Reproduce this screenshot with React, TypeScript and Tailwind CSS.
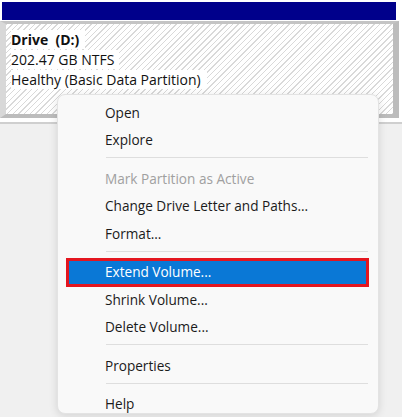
type Entry =
  | { kind: 'item'; label: string; disabled?: boolean; active?: boolean }
  | { kind: 'sep' };

const MENU: Entry[] = [
  { kind: 'item', label: 'Open' },
  { kind: 'item', label: 'Explore' },
  { kind: 'sep' },
  { kind: 'item', label: 'Mark Partition as Active', disabled: true },
  { kind: 'item', label: 'Change Drive Letter and Paths...' },
  { kind: 'item', label: 'Format...' },
  { kind: 'sep' },
  { kind: 'item', label: 'Extend Volume...', active: true },
  { kind: 'item', label: 'Shrink Volume...' },
  { kind: 'item', label: 'Delete Volume...' },
  { kind: 'sep' },
  { kind: 'item', label: 'Properties' },
  { kind: 'sep' },
  { kind: 'item', label: 'Help' },
];

const font = "font-['Open_Sans','Noto_Sans',sans-serif]";

export default function App() {
  return (
    <div className={`relative w-[402px] h-[417px] overflow-hidden bg-[#f0f0f0] ${font}`}>
      {/* Disk panel */}
      <div className="bg-white pt-[2px]">
        <div className="ml-[2px] w-[394px] h-[18px] bg-[#00008b]" />
        <div className="mt-[1px] w-[399px] border-t-[3px] border-l-[6px] border-r-[6px] border-b-[4px] border-t-[#c4c4c4] border-l-[#d8d8d8] border-r-[#bcbcbc] border-b-[#bcbcbc]">
          <div className="h-[90px] pt-[6px] pl-[5px] bg-[repeating-linear-gradient(135deg,#d9d9d9_0px,#d9d9d9_1px,#ffffff_1px,#ffffff_4px)] text-[#111] text-[14px] leading-[20px]">
            <div>
              <span className="bg-white pr-[6px] font-bold">Drive&nbsp;&nbsp;(D:)</span>
            </div>
            <div>
              <span className="bg-white pr-[5px]">202.47 GB NTFS</span>
            </div>
            <div>
              <span className="bg-white pr-[6px]">Healthy (Basic Data Partition)</span>
            </div>
          </div>
        </div>
        <div className="h-[4px] bg-white" />
      </div>
      <div className="h-[2px] bg-[#cfcfcf]" />

      {/* Context menu */}
      <div className="absolute left-[57px] top-[94px] w-[322px] h-[320px] overflow-hidden rounded-[8px] border border-[#e3e3e3] bg-[#f9f9f9] shadow-[0_2px_8px_rgba(0,0,0,0.12)] pt-[4px] text-[13.6px]">
        {MENU.map((entry, i) =>
          entry.kind === 'sep' ? (
            <div key={i} className="h-[11px] pt-[3px]">
              <div className="ml-[48px] mr-[10px] h-px bg-[#dedede]" />
            </div>
          ) : entry.active ? (
            <div
              key={i}
              className="ml-[8px] mr-[9px] -my-[1px] h-[29.5px] flex items-center border-[3px] border-[#e4161f] bg-[#0a78d6] pl-[36px] text-white"
            >
              {entry.label}
            </div>
          ) : (
            <div
              key={i}
              className={`h-[27.5px] flex items-center pl-[47px] ${entry.disabled ? 'text-[#a0a0a0]' : 'text-[#1b1b1b]'}`}
            >
              {entry.label}
            </div>
          )
        )}
      </div>
    </div>
  );
}
